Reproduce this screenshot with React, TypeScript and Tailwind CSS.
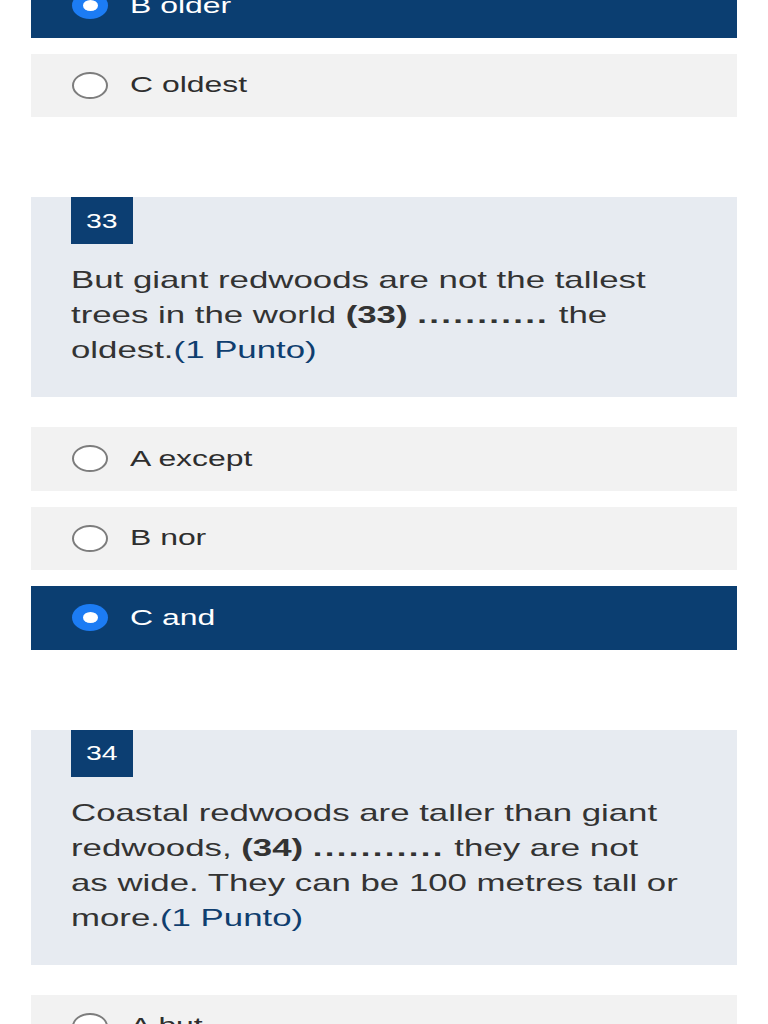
import React from "react";

type Option = { label: string; selected?: boolean };

function Radio({ selected }: { selected?: boolean }) {
  if (selected) {
    return (
      <span className="flex h-[27px] w-[36px] shrink-0 items-center justify-center rounded-[50%] bg-[#1c7cf4]">
        <span className="h-[11px] w-[15px] rounded-[50%] bg-white" />
      </span>
    );
  }
  return <span className="h-[27px] w-[36px] shrink-0 rounded-[50%] border-2 border-[#7d7d7d] bg-white" />;
}

function OptionRow({ label, selected }: Option) {
  return (
    <div
      className={`flex h-[63.5px] items-center gap-[22px] pl-[41px] ${
        selected ? "bg-[#0b3e71] text-white" : "bg-[#f2f2f2] text-[#2e2e2e]"
      }`}
    >
      <Radio selected={selected} />
      <span className="inline-block origin-left scale-x-[1.45] text-[22px] leading-none">{label}</span>
    </div>
  );
}

function QuestionCard({ num, children }: { num: string; children: React.ReactNode }) {
  return (
    <div className="bg-[#e7ebf1] pb-[30px] pl-[40px]">
      <div className="flex h-[47px] w-[62px] items-center justify-center bg-[#0c3e72]">
        <span className="inline-block scale-x-[1.35] text-[21px] text-white">{num}</span>
      </div>
      <p className="mt-[18px] w-[420px] origin-left scale-x-[1.45] text-[24px] leading-[35px] text-[#333333]">
        {children}
      </p>
    </div>
  );
}

const Dots = () => <span className="font-bold tracking-[1.6px]">...........</span>;
const Punto = () => <span className="text-[#0f3e6f]">(1 Punto)</span>;

export default function App() {
  return (
    <div className="min-h-screen overflow-hidden bg-white px-[31px] font-['Liberation_Sans',Arial,sans-serif]">
      <div className="-mt-[26px] flex flex-col gap-4">
        <OptionRow label="B older" selected />
        <OptionRow label="C oldest" />
      </div>

      <div className="mt-20">
        <QuestionCard num="33">
          But giant redwoods are not the tallest trees in the world <b>(33)</b> <Dots /> the oldest.
          <Punto />
        </QuestionCard>
      </div>

      <div className="mt-[30px] flex flex-col gap-4">
        <OptionRow label="A except" />
        <OptionRow label="B nor" />
        <OptionRow label="C and" selected />
      </div>

      <div className="mt-20">
        <QuestionCard num="34">
          Coastal redwoods are taller than giant redwoods, <b>(34)</b> <Dots /> they are not as wide. They can
          be 100 metres tall or more.
          <Punto />
        </QuestionCard>
      </div>

      <div className="mt-[30px] flex flex-col gap-4">
        <OptionRow label="A but" />
        <OptionRow label="B so" />
        <OptionRow label="C or" />
      </div>
    </div>
  );
}
